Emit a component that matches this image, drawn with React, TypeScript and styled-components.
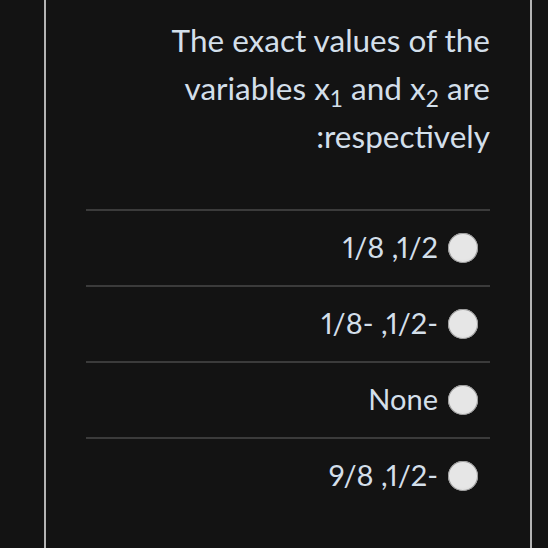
import styled, { createGlobalStyle } from "styled-components";

const GlobalStyle = createGlobalStyle`
  html, body {
    margin: 0;
    padding: 0;
    background: #131313;
  }
  body {
    font-family: Lato, "Open Sans", sans-serif;
  }
`;

const Page = styled.div`
  width: 548px;
  height: 548px;
  padding: 0 16px 0 44px;
  box-sizing: border-box;
  display: flex;
`;

const Panel = styled.div`
  flex: 1;
  border-left: 2px solid #b4b4b4;
  border-right: 2px solid #b4b4b4;
  padding: 16px 40px 0 40px;
  box-sizing: border-box;
`;

const Question = styled.p`
  margin: 0 0 49px 0;
  font-size: 31.5px;
  line-height: 48px;
  color: #d3dfea;
  text-align: right;
  sub {
    font-size: 0.72em;
    line-height: 0;
    vertical-align: -0.3em;
  }
`;

const Options = styled.ul`
  list-style: none;
  margin: 0;
  padding: 0;
`;

const Option = styled.li`
  height: 76px;
  border-top: 2px solid #3b3b3b;
  box-sizing: border-box;
  display: flex;
  align-items: center;
  justify-content: flex-end;
  gap: 10px;
  padding-right: 12px;
  font-size: 29px;
  font-variant-numeric: proportional-nums;
  font-feature-settings: "pnum" 1;
  color: #d3dfea;
`;

const Label = styled.span`
  padding-bottom: 4px;
`;

const Radio = styled.span`
  width: 30px;
  height: 30px;
  border-radius: 50%;
  background: radial-gradient(circle at 50% 40%, #e6e6e6 60%, #d2d2d2 100%);
  box-shadow: inset 0 0 0 1px #9a9a9a;
  flex-shrink: 0;
`;

const options = ["1/8 ,1/2", "1/8- ,1/2-", "None", "9/8 ,1/2-"];

export default function App() {
  return (
    <Page>
      <GlobalStyle />
      <Panel>
        <Question>
          The exact values of the variables x<sub>1</sub> and x<sub>2</sub> are
          :respectively
        </Question>
        <Options>
          {options.map((o) => (
            <Option key={o}>
              <Label>{o}</Label>
              <Radio />
            </Option>
          ))}
        </Options>
      </Panel>
    </Page>
  );
}
